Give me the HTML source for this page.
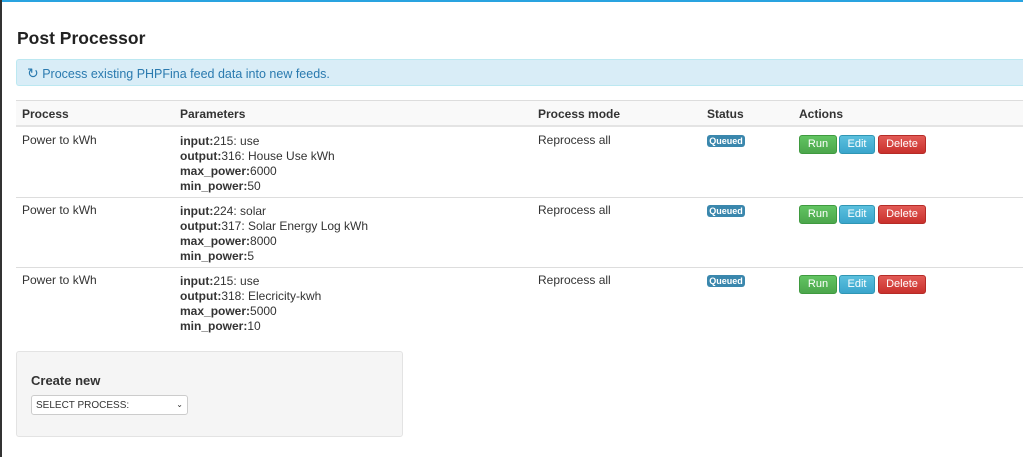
<!DOCTYPE html>
<html><head><style>
body{margin:0;width:1023px;height:457px;overflow:hidden;background:#fff;font-family:"Liberation Sans",Arial,sans-serif;font-size:12px;color:#333;position:relative}
.top{position:absolute;left:0;top:0;width:1023px;height:2px;background:#29a3e0}
.left{position:absolute;left:0;top:0;width:2px;height:457px;background:#333}
h1{position:absolute;left:17px;top:28px;margin:0;font-size:17.5px;font-weight:bold;color:#222}
.alert{position:absolute;left:16px;top:59px;width:1007px;height:27px;background:#d9edf7;border:1px solid #bce8f1;border-right:none;border-radius:3px 0 0 3px;box-sizing:border-box;color:#2a7aaf;font-size:12.5px;line-height:26px;padding-left:10px}
.hdr{position:absolute;left:16px;top:100px;width:1007px;height:27px;background:#f9f9f9;border-top:1px solid #ddd;border-bottom:2px solid #e4e4e4;box-sizing:border-box}
.c{position:absolute;font-size:12px;line-height:15px}
.b{font-weight:bold}
.sep{position:absolute;left:16px;width:1007px;height:1px;background:#ddd}
.badge{position:absolute;width:38px;height:12px;background:#3a87ad;color:#fff;font-size:9px;font-weight:bold;text-align:center;line-height:12px;border-radius:3px}
.btn{position:absolute;height:19px;color:#fff;font-size:11px;text-align:center;line-height:17px;border-radius:3px;box-sizing:border-box}
.run{background:linear-gradient(#62c462,#4ca64c);border:1px solid #3f9a3f;width:38px}
.edit{background:linear-gradient(#5bc0de,#3aa5cc);border:1px solid #2f96b4;width:36px}
.del{background:linear-gradient(#e25a55,#c9302c);border:1px solid #b52b27;width:48px}
.well{position:absolute;left:16px;top:351px;width:387px;height:86px;background:#f5f5f5;border:1px solid #e3e3e3;border-radius:3px;box-sizing:border-box}
.sel{position:absolute;left:31px;top:395px;width:157px;height:20px;background:#fff;border:1px solid #ccc;border-radius:3px;box-sizing:border-box;font-size:10px;line-height:19px;padding-left:4px}
</style></head><body>
<div class="top"></div><div class="left"></div>
<h1>Post Processor</h1>
<div class="alert"><span style="font-size:14px">&#x21bb;</span> Process existing PHPFina feed data into new feeds.</div>
<div class="hdr"></div>
<div class="c b" style="left:22px;top:107px">Process</div>
<div class="c b" style="left:180px;top:107px">Parameters</div>
<div class="c b" style="left:538px;top:107px">Process mode</div>
<div class="c b" style="left:707px;top:107px">Status</div>
<div class="c b" style="left:799px;top:107px">Actions</div>

<div class="c" style="left:22px;top:133px">Power to kWh</div>
<div class="c" style="left:180px;top:134px"><b>input:</b>215: use<br><b>output:</b>316: House Use kWh<br><b>max_power:</b>6000<br><b>min_power:</b>50</div>
<div class="c" style="left:538px;top:133px">Reprocess all</div>
<div class="badge" style="left:707px;top:135px">Queued</div>
<div class="btn run" style="left:799px;top:135px">Run</div><div class="btn edit" style="left:839px;top:135px">Edit</div><div class="btn del" style="left:878px;top:135px">Delete</div>
<div class="sep" style="top:197px"></div>

<div class="c" style="left:22px;top:203px">Power to kWh</div>
<div class="c" style="left:180px;top:204px"><b>input:</b>224: solar<br><b>output:</b>317: Solar Energy Log kWh<br><b>max_power:</b>8000<br><b>min_power:</b>5</div>
<div class="c" style="left:538px;top:203px">Reprocess all</div>
<div class="badge" style="left:707px;top:205px">Queued</div>
<div class="btn run" style="left:799px;top:205px">Run</div><div class="btn edit" style="left:839px;top:205px">Edit</div><div class="btn del" style="left:878px;top:205px">Delete</div>
<div class="sep" style="top:267px"></div>

<div class="c" style="left:22px;top:273px">Power to kWh</div>
<div class="c" style="left:180px;top:274px"><b>input:</b>215: use<br><b>output:</b>318: Elecricity-kwh<br><b>max_power:</b>5000<br><b>min_power:</b>10</div>
<div class="c" style="left:538px;top:273px">Reprocess all</div>
<div class="badge" style="left:707px;top:275px">Queued</div>
<div class="btn run" style="left:799px;top:275px">Run</div><div class="btn edit" style="left:839px;top:275px">Edit</div><div class="btn del" style="left:878px;top:275px">Delete</div>

<div class="well"></div>
<div class="c b" style="left:31px;top:373px;font-size:13px">Create new</div>
<div class="sel">SELECT PROCESS:<span style="position:absolute;right:4px;top:-1px;font-size:8px">&#x2304;</span></div>
</body></html>
